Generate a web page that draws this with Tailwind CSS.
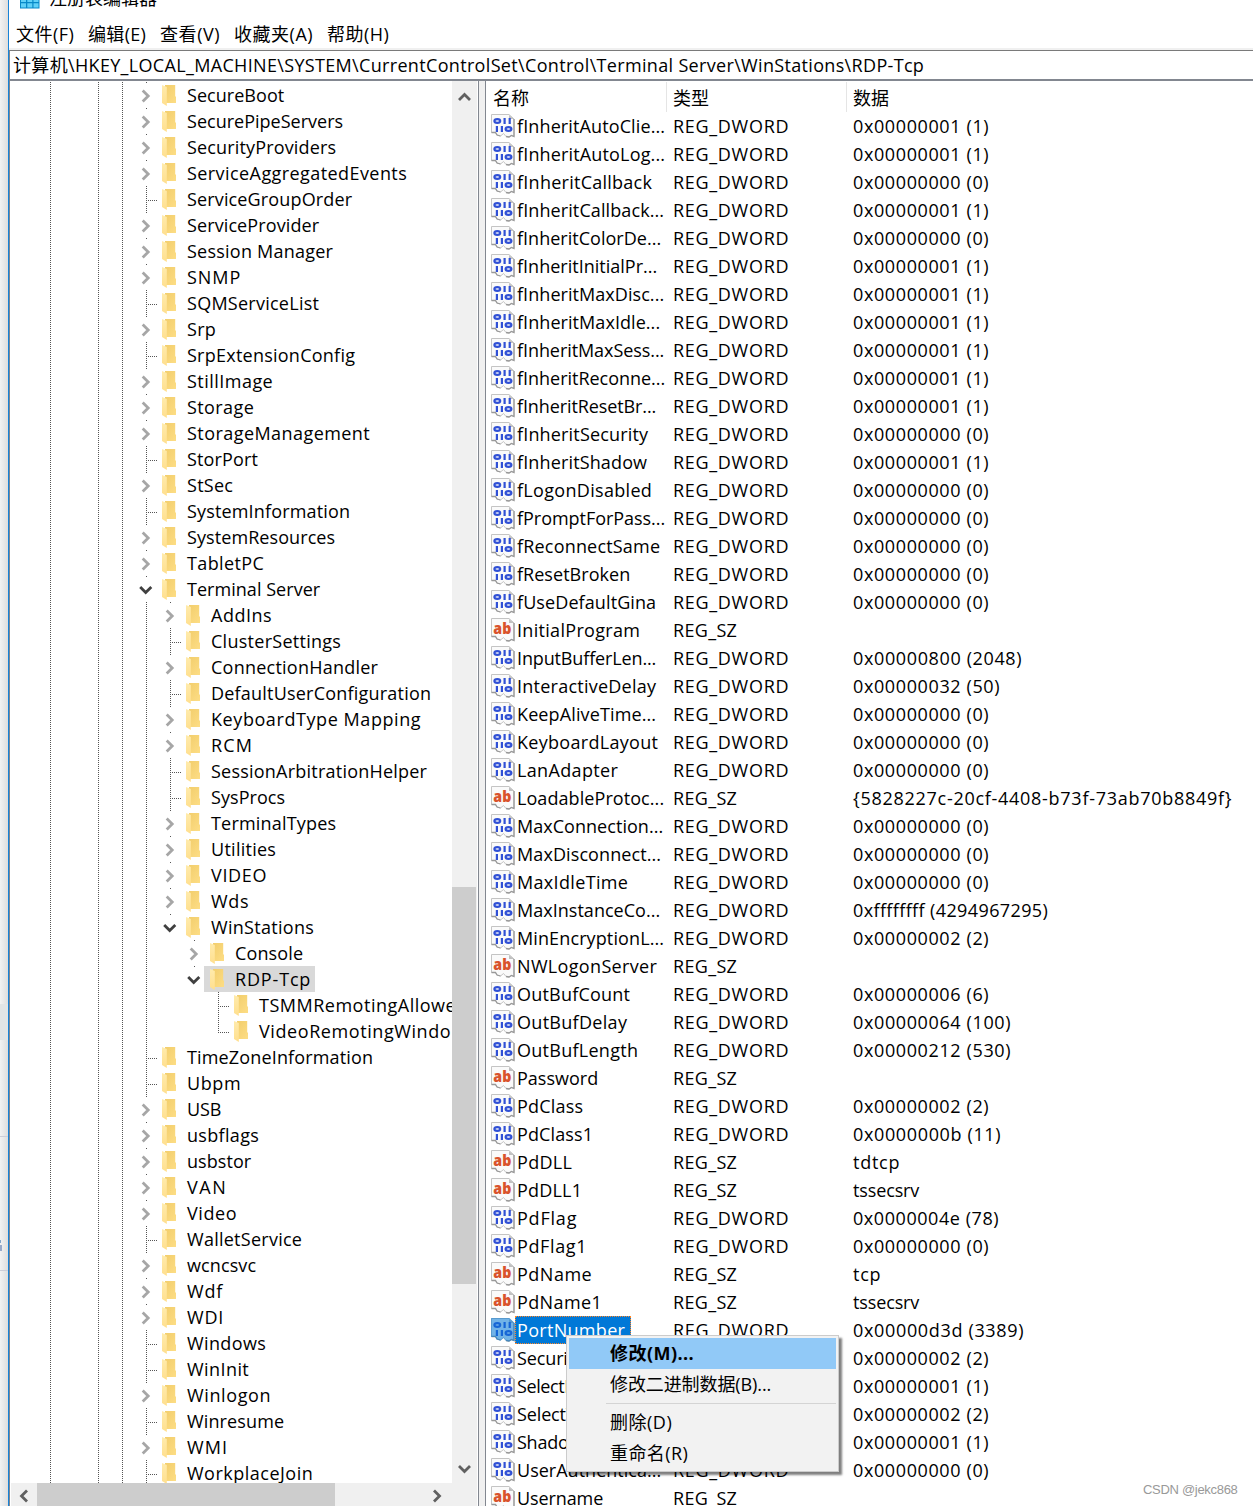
<!DOCTYPE html>
<html lang="zh-CN">
<head>
  <meta charset="UTF-8" />
  <meta name="viewport" content="width=device-width, initial-scale=1" />
  <title>注册表编辑器</title>
  <script src="https://cdn.jsdelivr.net/npm/@tailwindcss/browser@4"></script>
</head>
<body class="w-[1253px] h-[1506px] overflow-hidden bg-white font-['Open_Sans','Noto_Sans_CJK_SC',sans-serif] text-[18px] leading-[26px] text-black whitespace-nowrap">
  <svg class="absolute w-0 h-0">
    <defs>
      <linearGradient id="back" x1="0" x2="1" y1="0" y2="1"><stop offset="0" stop-color="#f1cc69" /><stop offset="1" stop-color="#fddd85" /></linearGradient>
      <linearGradient id="front" x1="0" x2="0" y1="0" y2="1"><stop offset="0" stop-color="#ffebac" /><stop offset="1" stop-color="#ffdf8e" /></linearGradient>
    </defs>
    <symbol id="folder" viewBox="0 0 24 26">
      <path d="M4 3H17.2V14L18 15V21H7V3Z" fill="url(#back)" />
      <path d="M4 3L8.8 5V24L4 21Z" fill="url(#front)" />
    </symbol>
    <symbol id="sheet" viewBox="0 0 24 24">
      <path d="M.5.5H18L23 5V22.5L20.5 21.5 18 23 15 22.5 12.5 19.5 9.5 22 6 21 4.5 18.5.5 18.5Z" fill="#fafafa" stroke="#c4c4c4" />
      <path d="M23 5V22.5L20.5 21.5 18 23 15 22.5M9.5 22L6 21 4.5 18.5.5 18.5" fill="none" stroke="#999" stroke-width="1.3" />
      <path d="M18 1V5H23Z" fill="#c0c0c0" />
    </symbol>
    <symbol id="dword" viewBox="0 0 24 24">
      <use href="#sheet" />
      <g fill="none" stroke="#3050d5" stroke-width="2.2">
        <ellipse cx="6.3" cy="7" rx="2.9" ry="1.9" />
        <path d="M13.6 4V10M18.7 4V10M5.9 12V18M10.9 12V18" />
        <ellipse cx="17.5" cy="15" rx="2.9" ry="1.9" />
      </g>
    </symbol>
    <symbol id="dword-selected" viewBox="0 0 24 24">
      <use href="#dword" />
      <path d="M0 0H18.5L23.7 5V23.5L20.5 22.2 18 23.7 15 23 12.5 20 9.5 22.7 5.5 21.5 4.2 19H0Z" fill="#0078d7" fill-opacity="0.55" />
    </symbol>
    <symbol id="sz" viewBox="0 0 24 24">
      <use href="#sheet" />
      <text x="2.3" y="15.8" font-family="Open Sans" font-weight="800" font-size="15" textLength="18" lengthAdjust="spacingAndGlyphs" fill="#d9532c">ab</text>
    </symbol>
  </svg>

  <div class="flex h-full">
    <!-- strip of the window behind -->
    <div class="w-2 shrink-0 flex flex-col bg-linear-to-r from-[#f3f3f3] to-[#dedede]">
      <div class="h-[1004px]"></div>
      <div class="h-9 bg-[#e2e5e6]"></div>
      <div class="h-[96px]"></div>
      <div class="h-px bg-[#cdced8]"></div>
      <div class="h-[103px]"></div>
      <div class="h-[3px] w-px bg-[#83a5ca]"></div>
      <div class="h-[2px]"></div>
      <div class="h-[6px] w-[2px] bg-[#98a9ca]"></div>
      <div class="h-[19px]"></div>
      <div class="h-px bg-[#cdced8]"></div>
    </div>

    <div class="flex-1 min-w-0 flex flex-col border-l border-[#1883d7]">
      <div class="h-[23px] flex">
        <svg class="ml-[11px] -mt-[11px] w-5 h-5 shrink-0" viewBox="0 0 20 20">
          <path d="M0 0H19.5V19.5H0Z" fill="#0789c8" />
          <path d="M1 2H6V7H1ZM7.3 2H12.3V7H7.3ZM13.5 2H18.5V7H13.5ZM1 8H6V13H1ZM7.3 8H12.3V13H7.3ZM13.5 8H18.5V13H13.5ZM1 14.3H6V18.5H1ZM7.3 14.3H12.3V18.5H7.3ZM13.5 14.3H18.5V18.5H13.5Z" fill="#5fd0f7" />
        </svg>
        <span class="ml-[9px] -mt-[15px]">注册表编辑器</span>
      </div>
      <div class="h-[25px] flex leading-[23px]">
        <span class="ml-[7px] w-[72px]" data-w="58">文件(F)</span>
        <span class="w-[72px]" data-w="58">编辑(E)</span>
        <span class="w-[74px]" data-w="60">查看(V)</span>
        <span class="w-[93px]" data-w="79">收藏夹(A)</span>
        <span data-w="62">帮助(H)</span>
      </div>
      <div class="h-[33px] border-t-2 border-[#f0f0f0]">
        <div class="h-[31px] border-t border-b-2 border-l border-t-[#7a7a7a] border-b-[#828790] border-l-[#828790] pl-[3px] leading-[28px]"><span data-w="911">计算机\HKEY_LOCAL_MACHINE\SYSTEM\CurrentControlSet\Control\Terminal Server\WinStations\RDP-Tcp</span></div>
      </div>

      <div class="flex-1 min-h-0 flex">
        <!-- key tree -->
        <div class="w-[470px] shrink-0 flex flex-col border-x border-[#828790]">
          <div class="h-[1402px] flex">
            <div id="tree" class="w-[442px] h-full overflow-hidden pt-px pl-[28px]"></div>
            <div class="w-[25px] bg-[#f0f0f0] flex flex-col">
              <svg class="w-6 h-[31px]" viewBox="0 0 24 31"><path d="M7 19L12.5 13.5 18 19" fill="none" stroke="#606060" stroke-width="2.8" /></svg>
              <div class="h-[775px]"></div>
              <div class="h-[397px] w-6 bg-[#cdcdcd]"></div>
              <div class="h-[171px]"></div>
              <svg class="w-6 h-[28px]" viewBox="0 0 24 28"><path d="M7 11L12.5 16.5 18 11" fill="none" stroke="#606060" stroke-width="2.8" /></svg>
            </div>
          </div>
          <div class="flex-1 ml-px mr-px bg-[#f0f0f0] flex">
            <svg class="w-[26px] h-[23px]" viewBox="0 0 26 23"><path d="M16 7.5L10.5 13 16 18.5" fill="none" stroke="#606060" stroke-width="2.8" /></svg>
            <div class="w-[298px] bg-[#cdcdcd]"></div>
            <div class="w-[90px]"></div>
            <svg class="w-[26px] h-[23px]" viewBox="0 0 26 23"><path d="M9 7.5L14.5 13 9 18.5" fill="none" stroke="#606060" stroke-width="2.8" /></svg>
          </div>
        </div>
        <div class="w-[6px] shrink-0 bg-[#f0f0f0]"></div>

        <!-- value list -->
        <div class="flex-1 min-w-0 border-l border-[#828790] pt-px overflow-hidden">
          <div class="flex h-[30px] leading-[32px]">
            <span class="w-[181px] pl-[7px] border-r border-[#e5e5e5]">名称</span>
            <span class="w-[180px] pl-[6px] border-r border-[#e5e5e5]">类型</span>
            <span class="pl-[6px]">数据</span>
          </div>
          <div id="values"></div>
        </div>
      </div>
    </div>
  </div>

  <!-- context menu -->
  <div class="absolute left-[566px] top-[1335px] w-[273px] h-[137px] border border-[#ccc] bg-[#f2f2f2] p-[2px] shadow-[3px_3px_2px_rgba(0,0,0,0.5)] leading-[31px]">
    <div class="h-[31px] pl-[41px] bg-[#91c9f7] font-bold"><span data-w="84" data-weight="bold">修改(M)...</span></div>
    <div class="h-[31px] pl-[41px]"><span data-w="161">修改二进制数据(B)...</span></div>
    <div class="h-[7px] pt-[3px] pl-[37px]"><div class="h-px bg-[#d4d4d4]"></div></div>
    <div class="h-[31px] pl-[41px]"><span data-w="62">删除(D)</span></div>
    <div class="h-[31px] pl-[41px]"><span data-w="78">重命名(R)</span></div>
  </div>

  <div class="absolute left-[1143px] top-[1481px] text-[13px] leading-[18px] tracking-[-0.3px] text-[#999] font-['Liberation_Sans',sans-serif]">CSDN @jekc868</div>

  <script>
    // depth, toggle (+ closed, v open, - leaf, e last leaf), name, text width
    const keys = [
      [0, "+", "SecureBoot", 97], [0, "+", "SecurePipeServers", 156], [0, "+", "SecurityProviders", 149],
      [0, "+", "ServiceAggregatedEvents", 220], [0, "-", "ServiceGroupOrder", 165], [0, "+", "ServiceProvider", 132],
      [0, "+", "Session Manager", 146], [0, "+", "SNMP", 54], [0, "-", "SQMServiceList", 132], [0, "+", "Srp", 29],
      [0, "-", "SrpExtensionConfig", 168], [0, "+", "StillImage", 86], [0, "+", "Storage", 67],
      [0, "+", "StorageManagement", 183], [0, "-", "StorPort", 71], [0, "+", "StSec", 46],
      [0, "-", "SystemInformation", 163], [0, "+", "SystemResources", 148], [0, "+", "TabletPC", 77],
      [0, "v", "Terminal Server", 133], [1, "+", "AddIns", 61], [1, "-", "ClusterSettings", 130],
      [1, "+", "ConnectionHandler", 167], [1, "-", "DefaultUserConfiguration", 220], [1, "+", "KeyboardType Mapping", 210],
      [1, "+", "RCM", 42], [1, "-", "SessionArbitrationHelper", 216], [1, "-", "SysProcs", 74],
      [1, "+", "TerminalTypes", 125], [1, "+", "Utilities", 65], [1, "+", "VIDEO", 56], [1, "+", "Wds", 38],
      [1, "v", "WinStations", 103], [2, "+", "Console", 68], [2, "v", "RDP-Tcp", 76],
      [3, "-", "TSMMRemotingAllowe", 197], [3, "e", "VideoRemotingWindo", 192],
      [0, "-", "TimeZoneInformation", 186], [0, "-", "Ubpm", 54], [0, "+", "USB", 34], [0, "+", "usbflags", 72],
      [0, "+", "usbstor", 64], [0, "+", "VAN", 40], [0, "+", "Video", 50], [0, "-", "WalletService", 115],
      [0, "+", "wcncsvc", 69], [0, "+", "Wdf", 36], [0, "+", "WDI", 37], [0, "-", "Windows", 79],
      [0, "-", "WinInit", 62], [0, "+", "Winlogon", 84], [0, "-", "Winresume", 97], [0, "+", "WMI", 41],
      [0, "-", "WorkplaceJoin", 126]
    ];

    const dots = 'fill="none" stroke="#555" stroke-dasharray="1 1"';
    const shapes = {
      " ": "",
      "|": `<path d="M12.5 0V26" ${dots}/>`,
      "+": `<path d="M12.5 0V1" stroke="#555"/><path d="M8.7 8.5L14.2 14 8.7 19.5" fill="none" stroke="#a6a6a6" stroke-width="2.8"/>`,
      "v": `<path d="M12.5 0V1" stroke="#555"/><path d="M6.2 11L11.7 16.5 17.3 11" fill="none" stroke="#404040" stroke-width="2.8"/>`,
      "-": `<path d="M12.5 0V26M12 14.5H23" ${dots}/>`,
      "e": `<path d="M12.5 0V15M12 14.5H23" ${dots}/>`
    };
    const cell = t => `<svg class="w-6 h-[26px] shrink-0" viewBox="0 0 24 26">${shapes[t]}</svg>`;
    // ancestor lines to the left of each depth
    const guides = ["| ||", "| |||", "| ||| ", "| |||  "];

    document.getElementById("tree").innerHTML = keys.map(([depth, toggle, name, w]) => {
      const selected = name === "RDP-Tcp" ? "bg-[#d9d9d9]" : "";
      return `<div class="flex h-[26px]">${guides[depth].split("").map(cell).join("")}${cell(toggle)}
        <div class="flex -ml-[2px] pl-[2px] pr-1 ${selected}">
          <svg class="w-6 h-[26px] shrink-0"><use href="#folder"/></svg>
          <span class="pl-[5px]"><span data-w="${w}">${name}</span></span>
        </div></div>`;
    }).join("");

    // name, name width, data, data width, kind; empty data is an empty string value
    const values = [
      ["fInheritAutoClie...", 148, "0x00000001 (1)"], ["fInheritAutoLog...", 148, "0x00000001 (1)"],
      ["fInheritCallback", 135, "0x00000000 (0)"], ["fInheritCallback...", 147, "0x00000001 (1)"],
      ["fInheritColorDe...", 144, "0x00000000 (0)"], ["fInheritInitialPr...", 140, "0x00000001 (1)"],
      ["fInheritMaxDisc...", 147, "0x00000001 (1)"], ["fInheritMaxIdle...", 143, "0x00000001 (1)"],
      ["fInheritMaxSess...", 147, "0x00000001 (1)"], ["fInheritReconne...", 148, "0x00000001 (1)"],
      ["fInheritResetBr...", 139, "0x00000001 (1)"], ["fInheritSecurity", 131, "0x00000000 (0)"],
      ["fInheritShadow", 130, "0x00000001 (1)"], ["fLogonDisabled", 135, "0x00000000 (0)"],
      ["fPromptForPass...", 148, "0x00000000 (0)"], ["fReconnectSame", 143, "0x00000000 (0)"],
      ["fResetBroken", 113, "0x00000000 (0)"], ["fUseDefaultGina", 139, "0x00000000 (0)"],
      ["InitialProgram", 123, ""], ["InputBufferLen...", 139, "0x00000800 (2048)", 169],
      ["InteractiveDelay", 139, "0x00000032 (50)", 147], ["KeepAliveTime...", 139, "0x00000000 (0)"],
      ["KeyboardLayout", 141, "0x00000000 (0)"], ["LanAdapter", 101, "0x00000000 (0)"],
      ["LoadableProtoc...", 147, "{5828227c-20cf-4408-b73f-73ab70b8849f}", 379, "sz"],
      ["MaxConnection...", 146, "0x00000000 (0)"], ["MaxDisconnect...", 144, "0x00000000 (0)"],
      ["MaxIdleTime", 111, "0x00000000 (0)"], ["MaxInstanceCo...", 143, "0xffffffff (4294967295)", 195],
      ["MinEncryptionL...", 147, "0x00000002 (2)"], ["NWLogonServer", 140, ""],
      ["OutBufCount", 113, "0x00000006 (6)"], ["OutBufDelay", 110, "0x00000064 (100)", 158],
      ["OutBufLength", 121, "0x00000212 (530)", 158], ["Password", 81, ""], ["PdClass", 66, "0x00000002 (2)"],
      ["PdClass1", 76, "0x0000000b (11)", 148], ["PdDLL", 55, "tdtcp", 47, "sz"], ["PdDLL1", 65, "tssecsrv", 66, "sz"],
      ["PdFlag", 60, "0x0000004e (78)", 146], ["PdFlag1", 70, "0x00000000 (0)"], ["PdName", 75, "tcp", 28, "sz"],
      ["PdName1", 85, "tssecsrv", 66, "sz"], ["PortNumber", 108, "0x00000d3d (3389)", 171],
      ["SecurityLayer", 111, "0x00000002 (2)"], ["SelectNetworkDe...", 151, "0x00000001 (1)"],
      ["SelectTransport", 130, "0x00000002 (2)"], ["Shadow", 65, "0x00000001 (1)"],
      ["UserAuthentica...", 144, "0x00000000 (0)"], ["Username", 86, ""]
    ];

    document.getElementById("values").innerHTML = values.map(([name, w, data, dw, kind]) => {
      const sz = kind === "sz" || data === "";
      const selected = name === "PortNumber";
      const icon = selected ? "dword-selected" : sz ? "sz" : "dword";
      return `<div class="flex h-7 leading-[28px]">
        <div class="w-[181px] shrink-0 pl-[5px] flex">
          <svg class="w-6 h-6 mt-[2px] shrink-0"><use href="#${icon}"/></svg>
          <span class="${selected ? "w-[116px] pl-px bg-[#0078d7] text-white border border-dotted border-[#ff8728] leading-[26px]" : "pl-[2px]"}"><span data-w="${w}">${name}</span></span>
        </div>
        <span class="w-[180px] shrink-0 pl-[6px]"><span data-w="${sz ? 64 : 116}">${sz ? "REG_SZ" : "REG_DWORD"}</span></span>
        <span class="pl-[6px]"><span data-w="${dw || 136}">${data}</span></span>
      </div>`;
    }).join("");

    const ctx = document.createElement("canvas").getContext("2d");
    document.querySelectorAll("[data-w]").forEach(el => {
      const text = el.textContent;
      if (!text) return;
      ctx.font = `${el.dataset.weight || "normal"} 18px "Open Sans", "Noto Sans CJK SC", sans-serif`;
      el.style.letterSpacing = (+el.dataset.w + 0.2 - ctx.measureText(text).width) / text.length + "px";
    });
  </script>
</body>
</html>
